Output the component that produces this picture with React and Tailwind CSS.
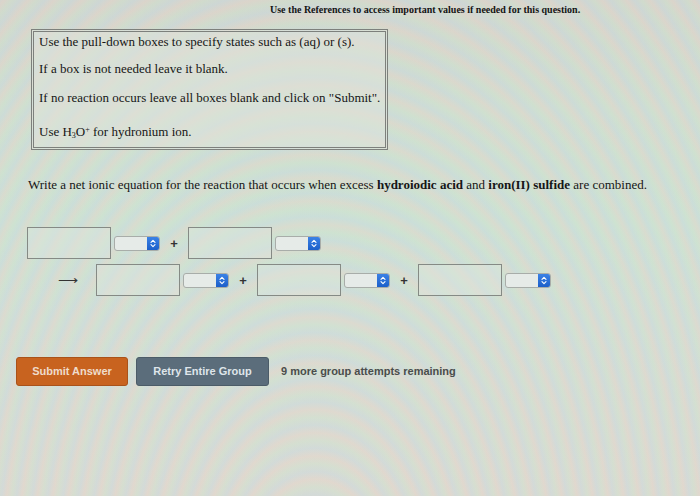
import React from "react";

const Chev = () => (
  <svg width="6" height="9" viewBox="0 0 6 9" fill="none">
    <path d="M1 3.3 L3 1.3 L5 3.3" stroke="white" strokeWidth="1.1" strokeLinecap="round" strokeLinejoin="round" />
    <path d="M1 5.7 L3 7.7 L5 5.7" stroke="white" strokeWidth="1.1" strokeLinecap="round" strokeLinejoin="round" />
  </svg>
);

const Select = () => (
  <div className="ml-[3px] flex h-[15px] w-[46px] overflow-hidden rounded-[3px] border border-[#a8ada9] bg-[#e6ebe8]">
    <div className="flex-1" />
    <div className="flex w-[12px] items-center justify-center bg-[linear-gradient(180deg,#3b82e6,#1c5fc9)]">
      <Chev />
    </div>
  </div>
);

const Box = () => (
  <div className="h-[32px] w-[84px] border border-[#858a85] bg-[#dfe5de]/40" />
);

const Plus = () => (
  <div className="w-[28px] text-center text-[13px] font-bold leading-none text-[#333]" style={{ fontFamily: '"Liberation Sans", Arial, sans-serif' }}>+</div>
);

export default function App() {
  const serif = { fontFamily: '"Liberation Serif", "Times New Roman", serif' };
  const sans = { fontFamily: '"Liberation Sans", Arial, sans-serif' };
  return (
    <div className="relative h-[496px] w-[700px] overflow-hidden bg-[repeating-radial-gradient(ellipse_at_45%_120%,rgba(255,190,170,0.14)_0px,rgba(160,205,240,0.14)_5px,rgba(180,235,185,0.14)_10px,rgba(255,190,170,0.14)_15px),linear-gradient(180deg,#d5d8d0_0%,#d4ded3_22%,#d2e1d5_45%,#d6dfd6_65%,#dcdcd4_100%)]">
      <div className="pt-[2px] pl-[270px] text-[10px] font-bold leading-[15px] text-[#141414]" style={serif}>
        Use the References to access important values if needed for this question.
      </div>

      <div className="mt-[12px] ml-[31px] h-[121px] w-[357px] border-[3px] border-double border-[#7d807c] bg-[#dfe3dc]/50 pl-[5px] text-[13px] leading-[20px] text-[#161616]" style={serif}>
        <div>Use the pull-down boxes to specify states such as (aq) or (s).</div>
        <div className="mt-[7px]">If a box is not needed leave it blank.</div>
        <div className="mt-[9px]">If no reaction occurs leave all boxes blank and click on "Submit".</div>
        <div className="mt-[14px]">
          Use H<sub className="text-[8px]">3</sub>O<sup className="text-[8px]">+</sup> for hydronium ion.
        </div>
      </div>

      <div className="mt-[27px] ml-[28px] text-[13px] leading-[16px] text-[#161616]" style={serif}>
        Write a net ionic equation for the reaction that occurs when excess <b>hydroiodic acid</b> and <b>iron(II) sulfide</b> are combined.
      </div>

      <div className="mt-[34px] ml-[27px] flex items-center">
        <Box />
        <Select />
        <Plus />
        <Box />
        <Select />
      </div>

      <div className="mt-[5px] ml-[58px] flex items-center">
        <div className="w-[38px] text-[14px] leading-none text-[#333]" style={sans}>⟶</div>
        <Box />
        <Select />
        <Plus />
        <Box />
        <Select />
        <Plus />
        <Box />
        <Select />
      </div>

      <div className="mt-[61px] ml-[16px] flex items-center" style={sans}>
        <div className="flex h-[29px] w-[112px] items-center justify-center rounded-[3px] border border-[#a9521a] bg-[#c8631f] text-[11px] font-bold text-[#efdccb]">
          Submit Answer
        </div>
        <div className="ml-[8px] flex h-[29px] w-[133px] items-center justify-center rounded-[3px] border border-[#4c5c68] bg-[#5b6d7b] text-[11px] font-bold text-[#dfe5ea]">
          Retry Entire Group
        </div>
        <div className="ml-[12px] text-[11px] font-bold text-[#4a4d4c]">9 more group attempts remaining</div>
      </div>
    </div>
  );
}
